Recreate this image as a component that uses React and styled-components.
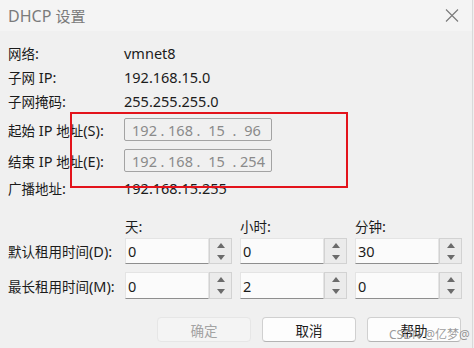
import React from 'react';
import styled, { createGlobalStyle } from 'styled-components';

const GlobalStyle = createGlobalStyle`
  html, body {
    margin: 0;
    padding: 0;
    background: #f0f0f0;
  }
  body {
    font-family: "Noto Sans", "Noto Sans CJK SC", sans-serif;
  }
`;

const Window = styled.div`
  position: relative;
  width: 473px;
  height: 348px;
  box-sizing: border-box;
  border-right: 1px solid #d9d9d9;
  background: #f0f0f0;
  color: #1b1b1b;
  font-size: 14.5px;
  overflow: hidden;
`;

const TitleBar = styled.div`
  height: 31px;
  display: flex;
  align-items: center;
  justify-content: space-between;
  padding: 0 13px 0 8px;
  background: #f4f4f4;
`;

const Title = styled.div`
  font-size: 16px;
  color: #7b7b7b;
`;

// Chinese glyphs in the dialog are set a bit smaller than the Latin ones
const Han = styled.span`
  font-size: ${(p) => p.$size || 13.5}px;
`;

const Body = styled.div`
  padding: 10px 0 0 8px;
`;

const InfoRow = styled.div`
  display: grid;
  grid-template-columns: 116px 1fr;
  align-items: center;
  height: 24px;
  white-space: nowrap;
`;

const IpGroup = styled.div`
  display: flex;
  flex-direction: column;
  gap: 8px;
  padding: 5px 0 4px;
`;

const IpRow = styled(InfoRow)`
  height: 23px;
`;

const IpBox = styled.div`
  display: flex;
  align-items: center;
  width: 148px;
  height: 23px;
  box-sizing: border-box;
  padding-left: 6px;
  border: 1px solid #a3a3a3;
  border-radius: 2px;
  color: #8a8a8a;
`;

const Octet = styled.span`
  width: 27px;
  text-align: center;
`;

const Dot = styled.span`
  width: 9px;
  text-align: center;
`;

const LeaseRow = styled.div`
  display: grid;
  grid-template-columns: 109px 107px 107px 107px;
  column-gap: 8px;
  align-items: center;
  height: ${(p) => p.$h}px;
  margin-top: ${(p) => p.$mt}px;
  white-space: nowrap;
`;

const Spinner = styled.div`
  display: flex;
  height: 100%;
`;

const Field = styled.div`
  flex: 1;
  display: flex;
  align-items: center;
  padding-left: 2px;
  background: #fbfbfb;
  border: 1px solid #e4e4e4;
  border-bottom-color: #8e8e8e;
`;

const StepBox = styled.div`
  width: 23px;
  display: flex;
  flex-direction: column;
  box-sizing: border-box;
  border: 1px solid #d2d2d2;
  background: #ebebeb;
`;

const Step = styled.div`
  flex: 1;
  display: flex;
  align-items: center;
  justify-content: center;
`;

const ButtonBar = styled.div`
  display: flex;
  justify-content: flex-end;
  gap: 11px;
  margin-top: 18px;
  padding-right: 11px;
`;

const Button = styled.div`
  width: 94px;
  height: 25px;
  box-sizing: border-box;
  display: flex;
  align-items: center;
  justify-content: center;
  border-radius: 4px;
  background: ${(p) => (p.$disabled ? '#f4f4f4' : '#fdfdfd')};
  border: 1px solid ${(p) => (p.$disabled ? '#e6e6e6' : '#d0d0d0')};
  border-bottom-color: ${(p) => (p.$disabled ? '#e6e6e6' : '#b4b4b4')};
  color: ${(p) => (p.$disabled ? '#a3a3a3' : '#1b1b1b')};
`;

const Highlight = styled.div`
  position: absolute;
  left: 70px;
  top: 112px;
  width: 278px;
  height: 76px;
  box-sizing: border-box;
  border: 2px solid #e3131b;
  pointer-events: none;
`;

const Watermark = styled.div`
  position: absolute;
  left: 389px;
  top: 325px;
  font-size: 12px;
  color: rgba(120, 120, 120, 0.75);
  white-space: nowrap;
`;

const Text = ({ children, size }) => (
  <span>
    {String(children)
      .split(/([\u3400-\u9fff]+)/)
      .filter(Boolean)
      .map((part, i) =>
        /[\u3400-\u9fff]/.test(part) ? <Han key={i} $size={size}>{part}</Han> : part
      )}
  </span>
);

const Close = () => (
  <svg width="14" height="13" viewBox="0 0 14 13">
    <path d="M1 0.5 L13 12.5 M13 0.5 L1 12.5" stroke="#7a7a7a" strokeWidth="1.1" fill="none" />
  </svg>
);

const Arrow = ({ up }) => (
  <svg width="8" height="5" viewBox="0 0 8 5">
    <path d={up ? 'M0 5 L4 0 L8 5 Z' : 'M0 0 L4 5 L8 0 Z'} fill="#6b6b6b" />
  </svg>
);

const IpAddress = ({ parts }) => (
  <IpBox>
    {parts.map((p, i) => (
      <React.Fragment key={i}>
        {i > 0 && <Dot>.</Dot>}
        <Octet>{p}</Octet>
      </React.Fragment>
    ))}
  </IpBox>
);

const NumberBox = ({ value }) => (
  <Spinner>
    <Field>{value}</Field>
    <StepBox>
      <Step><Arrow up /></Step>
      <Step><Arrow /></Step>
    </StepBox>
  </Spinner>
);

const App = () => {
  return (
    <Window>
      <GlobalStyle />
      <TitleBar>
        <Title><Text size={15}>DHCP 设置</Text></Title>
        <Close />
      </TitleBar>
      <Body>
        <InfoRow><Text>网络:</Text><span>vmnet8</span></InfoRow>
        <InfoRow><Text>子网 IP:</Text><span>192.168.15.0</span></InfoRow>
        <InfoRow><Text>子网掩码:</Text><span>255.255.255.0</span></InfoRow>
        <IpGroup>
          <IpRow>
            <Text>起始 IP 地址(S):</Text>
            <IpAddress parts={['192', '168', '15', '96']} />
          </IpRow>
          <IpRow>
            <Text>结束 IP 地址(E):</Text>
            <IpAddress parts={['192', '168', '15', '254']} />
          </IpRow>
        </IpGroup>
        <InfoRow><Text>广播地址:</Text><span>192.168.15.255</span></InfoRow>

        <LeaseRow $h={20} $mt={16}>
          <span />
          <Text>天:</Text>
          <Text>小时:</Text>
          <Text>分钟:</Text>
        </LeaseRow>
        <LeaseRow $h={26} $mt={2}>
          <Text>默认租用时间(D):</Text>
          <NumberBox value="0" />
          <NumberBox value="0" />
          <NumberBox value="30" />
        </LeaseRow>
        <LeaseRow $h={27} $mt={8}>
          <Text>最长租用时间(M):</Text>
          <NumberBox value="0" />
          <NumberBox value="2" />
          <NumberBox value="0" />
        </LeaseRow>

        <ButtonBar>
          <Button $disabled><Text>确定</Text></Button>
          <Button><Text>取消</Text></Button>
          <Button><Text>帮助</Text></Button>
        </ButtonBar>
      </Body>
      <Highlight />
      <Watermark>CSDN @亿梦@</Watermark>
    </Window>
  );
};

export default App;
